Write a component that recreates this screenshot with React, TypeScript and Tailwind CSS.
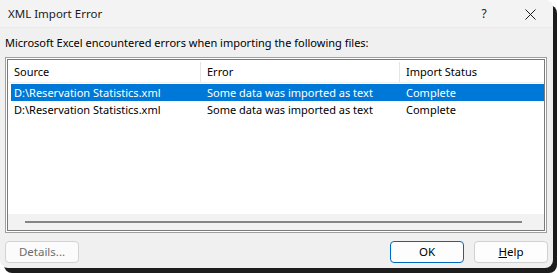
import React from "react";

const font = { fontFamily: '"Noto Sans", "Open Sans", sans-serif' };

export default function App() {
  const rows = [
    { src: "D:\\Reservation Statistics.xml", err: "Some data was imported as text", st: "Complete", sel: true },
    { src: "D:\\Reservation Statistics.xml", err: "Some data was imported as text", st: "Complete", sel: false },
  ];
  return (
    <div className="w-[557px] h-[273px] bg-white overflow-hidden text-black" style={font}>
      <div className="w-[553px] h-[268px] bg-[#f0f0f0] rounded-b-[8px] rounded-tr-[8px] shadow-[4px_5px_0_#1c1c1c] flex flex-col text-[11px]">
        {/* title bar */}
        <div className="h-[28px] bg-[#f3f3f3] flex items-center pl-[8px] pt-[1px] border-b border-[#ebebeb] rounded-tr-[8px]">
          <span className="text-[11.5px] text-[#1a1a1a]">XML Import Error</span>
          <span className="ml-auto w-[46px] text-center text-[12px] text-[#1a1a1a]">?</span>
          <span className="w-[46px] flex justify-center">
            <svg width="11" height="11" viewBox="0 0 11 11">
              <path d="M0.5 0.5 L10.5 10.5 M10.5 0.5 L0.5 10.5" stroke="#1a1a1a" strokeWidth="1" />
            </svg>
          </span>
        </div>
        {/* label */}
        <div className="pl-[5px] mt-[7px] h-[16px] leading-[16px] text-[11px]">
          Microsoft Excel encountered errors when importing the following files:
        </div>
        {/* list */}
        <div className="ml-[5px] mt-[6px] w-[542px] h-[176px] border border-[#a0a0a0] p-[1px] bg-white">
          <div className="w-full h-full border border-[#7a7a7a] bg-white flex flex-col">
            <div className="h-[23px] flex text-[11px] pt-[2px] border-b border-[#f0f0f0]">
              <div className="w-[193px] pl-[6px] flex items-center border-r border-[#e5e5e5]">Source</div>
              <div className="w-[199px] pl-[6px] flex items-center border-r border-[#e5e5e5]">Error</div>
              <div className="flex-1 pl-[6px] flex items-center">Import Status</div>
            </div>
            <div className="pl-[3px] pt-[1px] flex-1">
              {rows.map((r, i) => (
                <div
                  key={i}
                  className={
                    r.sel
                      ? "h-[17px] flex items-center pt-[1px] text-[11px] bg-[#0078d7] text-white"
                      : "h-[17px] flex items-center pt-[1px] text-[11px] text-black"
                  }
                >
                  <div className="w-[190px] pl-[3px]">{r.src}</div>
                  <div className="w-[199px] pl-[6px]">{r.err}</div>
                  <div className="flex-1 pl-[6px]">{r.st}</div>
                </div>
              ))}
            </div>
            <div className="h-[16px] bg-[#f2f2f2] flex items-center pl-[17px] pr-[22px]">
              <div className="w-full h-[2px] bg-[#858585]" />
            </div>
          </div>
        </div>
        {/* buttons */}
        <div className="mt-[8px] flex px-[5px] text-[11.5px]">
          <div className="w-[74px] h-[22px] rounded-[4px] border border-[#d3d3d3] bg-[#fbfbfb] flex items-center justify-center text-[#6d6d6d]">
            Details...
          </div>
          <div className="ml-auto w-[74px] h-[22px] rounded-[4px] border border-[#0067c0] bg-[#fdfdfd] flex items-center justify-center">
            OK
          </div>
          <div className="ml-[10px] w-[74px] h-[22px] rounded-[4px] border border-[#d0d0d0] bg-[#fdfdfd] flex items-center justify-center">
            <span><span className="underline">H</span>elp</span>
          </div>
        </div>
      </div>
    </div>
  );
}
